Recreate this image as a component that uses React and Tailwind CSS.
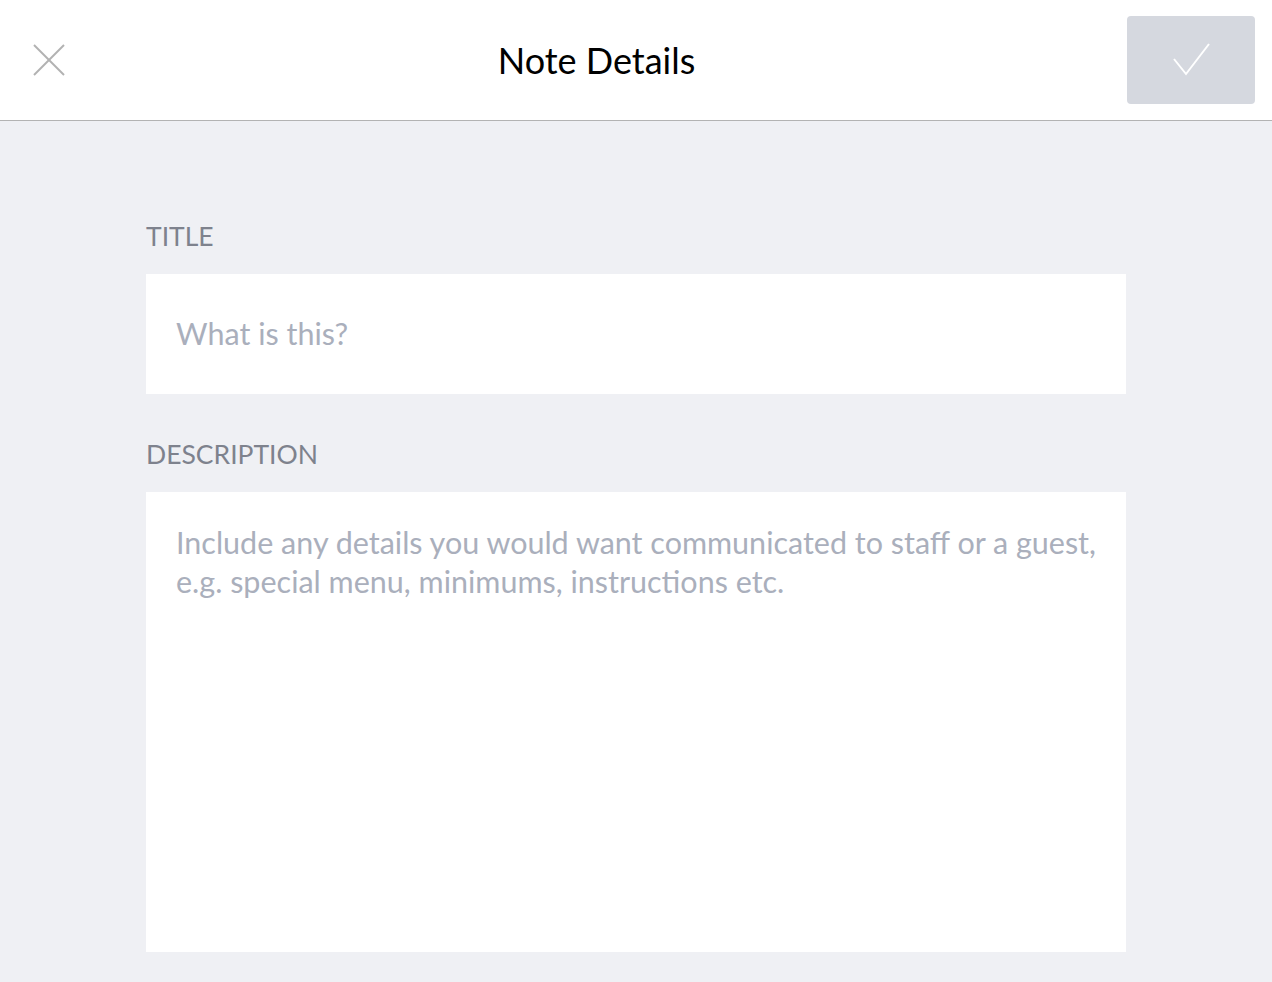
export default function App() {
  return (
    <div className="w-[1272px] h-[982px] bg-[#eff0f4] flex flex-col overflow-hidden" style={{ fontFamily: 'Lato, "Open Sans", sans-serif' }}>
      <header className="h-[121px] bg-white border-b border-[#b3b3b3] flex items-center shrink-0">
        <button className="ml-[32px] w-[34px] h-[34px] flex items-center justify-center shrink-0">
          <svg width="34" height="34" viewBox="0 0 34 34" fill="none" stroke="#b2b2b2" strokeWidth="2">
            <line x1="2" y1="2" x2="32" y2="32" />
            <line x1="32" y1="2" x2="2" y2="32" />
          </svg>
        </button>
        <h1 className="flex-1 text-center text-[36px] leading-[48px] text-black">Note Details</h1>
        <button className="mr-[17px] mb-[1px] w-[128px] h-[88px] bg-[#d5d8df] rounded-[4px] flex items-center justify-center shrink-0">
          <svg width="40" height="36" viewBox="0 0 40 36" fill="none" stroke="#ffffff" strokeWidth="2">
            <polyline points="3,17 15,32 38,2" />
          </svg>
        </button>
      </header>
      <main className="flex-1 px-[146px] pt-[99px]">
        <label className="block text-[26.5px] text-[#7e828d] leading-[32px]">TITLE</label>
        <div className="mt-[22px] h-[120px] bg-white flex items-center px-[30px]">
          <span className="text-[30.5px] text-[#aaafbc]">What is this?</span>
        </div>
        <label className="block mt-[44px] text-[26.5px] text-[#7e828d] leading-[32px]">DESCRIPTION</label>
        <div className="mt-[22px] h-[460px] bg-white px-[30px] pt-[31px]">
          <p className="text-[30.5px] leading-[39px] text-[#aaafbc]">Include any details you would want communicated to staff or a guest,<br />e.g. special menu, minimums, instructions etc.</p>
        </div>
      </main>
    </div>
  );
}
